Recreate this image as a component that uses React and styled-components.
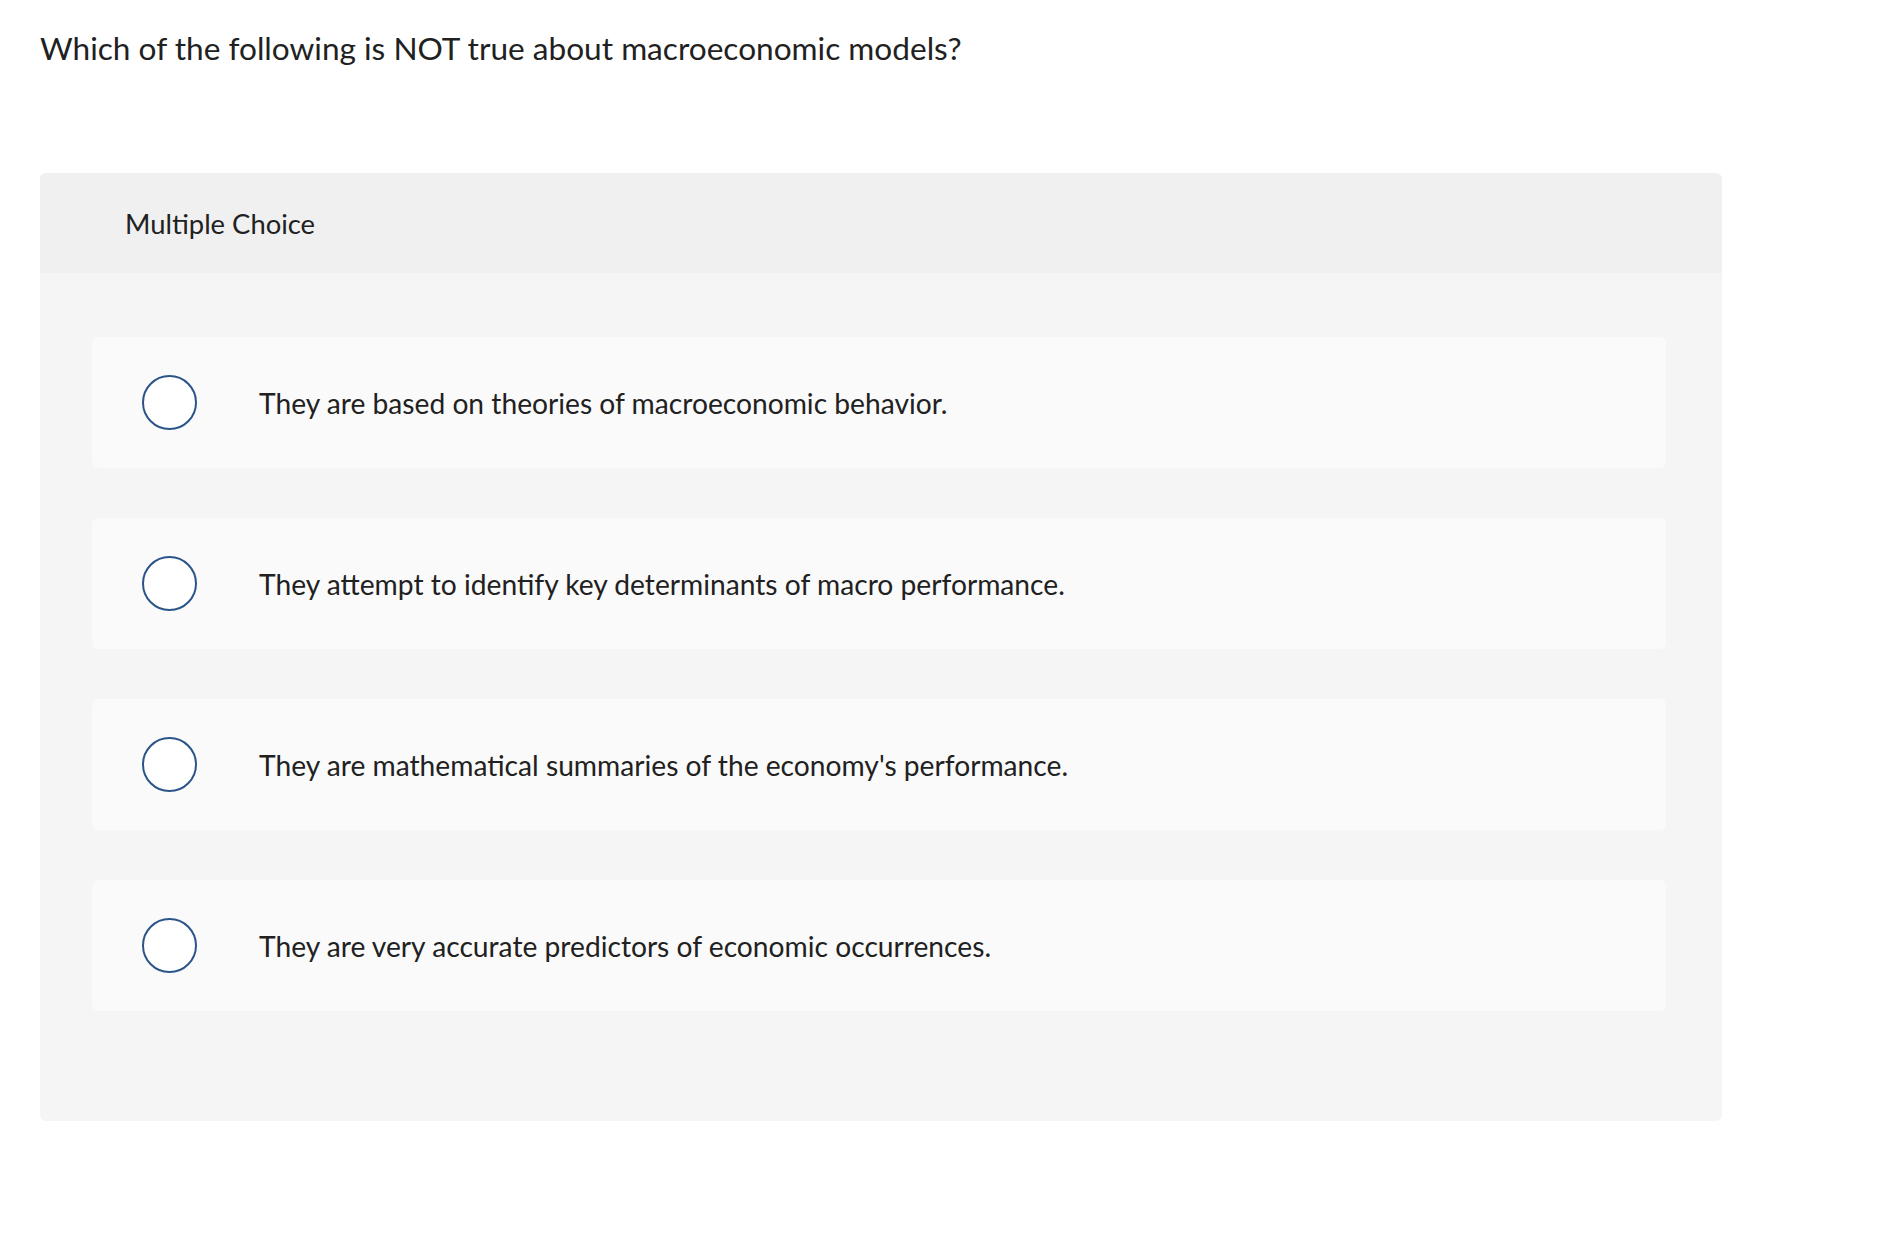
import React from "react";
import styled, { createGlobalStyle } from "styled-components";

const GlobalStyle = createGlobalStyle`
  html, body {
    margin: 0;
    padding: 0;
    background: #ffffff;
    font-family: Lato, "Open Sans", Arial, sans-serif;
    color: #222222;
  }
`;

const Page = styled.div`
  padding: 28px 40px 0 40px;
  width: 1682px;
`;

const Question = styled.h1`
  margin: 0 0 105px 0;
  font-size: 31.6px;
  line-height: 40px;
  font-weight: 400;
  color: #212121;
`;

const Card = styled.div`
  background: #f5f5f5;
  border-radius: 6px;
  overflow: hidden;
`;

const CardHeader = styled.div`
  height: 100px;
  display: flex;
  align-items: center;
  padding-left: 85px;
  background: #f0f0f0;
  font-size: 27.4px;
  color: #212121;
`;

const Options = styled.div`
  display: flex;
  flex-direction: column;
  gap: 50px;
  padding: 64px 56px 110px 52px;
`;

const Option = styled.label`
  height: 131px;
  display: flex;
  align-items: center;
  gap: 62px;
  padding-left: 50px;
  background: #fafafa;
  border-radius: 6px;
  cursor: pointer;
`;

const Radio = styled.span`
  width: 55px;
  height: 55px;
  box-sizing: border-box;
  border: 2px solid #2b5489;
  border-radius: 50%;
  background: #ffffff;
  flex-shrink: 0;
`;

const OptionText = styled.span`
  font-size: 28.2px;
  color: #212121;
`;

const choices = [
  "They are based on theories of macroeconomic behavior.",
  "They attempt to identify key determinants of macro performance.",
  "They are mathematical summaries of the economy's performance.",
  "They are very accurate predictors of economic occurrences.",
];

const App = () => {
  return (
    <>
      <GlobalStyle />
      <Page>
        <Question>
          Which of the following is NOT true about macroeconomic models?
        </Question>
        <Card>
          <CardHeader>Multiple Choice</CardHeader>
          <Options>
            {choices.map((text) => (
              <Option key={text}>
                <Radio />
                <OptionText>{text}</OptionText>
              </Option>
            ))}
          </Options>
        </Card>
      </Page>
    </>
  );
};

export default App;
